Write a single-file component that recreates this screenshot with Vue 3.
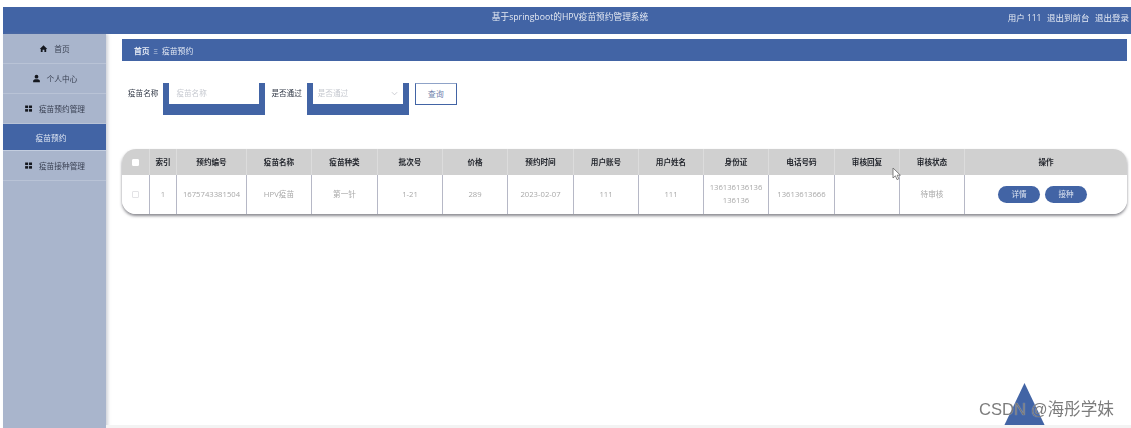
<script setup>
const menu = [
  { label: '首页', icon: 'home', h: 30 },
  { label: '个人中心', icon: 'user', h: 30 },
  { label: '疫苗预约管理', icon: 'grid', h: 30 },
  { label: '疫苗预约', icon: '', h: 27, active: true },
  { label: '疫苗接种管理', icon: 'grid', h: 30 },
]
const cols = [
  { t: '索引', w: 27, v: '1' },
  { t: '预约编号', w: 70, v: '1675743381504' },
  { t: '疫苗名称', w: 65, v: 'HPV疫苗' },
  { t: '疫苗种类', w: 66, v: '第一针' },
  { t: '批次号', w: 65, v: '1-21' },
  { t: '价格', w: 65, v: '289' },
  { t: '预约时间', w: 66, v: '2023-02-07' },
  { t: '用户账号', w: 65, v: '111' },
  { t: '用户姓名', w: 65, v: '111' },
  { t: '身份证', w: 65, v: '136136136136 136136', wrap: true },
  { t: '电话号码', w: 66, v: '13613613666' },
  { t: '审核回复', w: 65, v: '' },
  { t: '审核状态', w: 65, v: '待审核' },
]
</script>

<template>
  <div class="page">
    <header class="topbar">
      <span></span>
      <span class="title">基于springboot的HPV疫苗预约管理系统</span>
      <span class="user">
        <span>用户 111</span>
        <span>退出到前台</span>
        <span>退出登录</span>
      </span>
    </header>

    <div class="body">
      <aside class="sidebar">
        <div
          v-for="m in menu"
          :key="m.label"
          class="item"
          :class="{ active: m.active }"
          :style="{ height: m.h + 'px' }"
        >
          <svg v-if="m.icon === 'home'" class="ico" viewBox="0 0 12 12">
            <path d="M6 1.5 11 6.5 9.6 6.5 9.6 10.5 7.2 10.5 7.2 7.6 4.8 7.6 4.8 10.5 2.4 10.5 2.4 6.5 1 6.5Z" />
          </svg>
          <svg v-else-if="m.icon === 'user'" class="ico" viewBox="0 0 12 12">
            <circle cx="6" cy="3.6" r="2.5" />
            <path d="M1.5 11V9.2C1.5 7.8 3 7 6 7S10.5 7.8 10.5 9.2V11Z" />
          </svg>
          <svg v-else-if="m.icon === 'grid'" class="ico" viewBox="0 0 12 12">
            <rect x="1.5" y="2" width="4" height="3.4" />
            <rect x="6.7" y="2" width="4" height="3.4" />
            <rect x="1.5" y="6.8" width="4" height="3.4" />
            <rect x="6.7" y="6.8" width="4" height="3.4" />
          </svg>
          <span>{{ m.label }}</span>
        </div>
      </aside>

      <main class="main">
        <div class="crumb">
          <span class="c-home">首页</span>
          <span class="c-sep">Ξ</span>
          <span>疫苗预约</span>
        </div>

        <div class="search">
          <span class="lab">疫苗名称</span>
          <div class="well"><div class="field">疫苗名称</div></div>
          <span class="lab second">是否通过</span>
          <div class="well">
            <div class="field sel">
              <span>是否通过</span>
              <svg class="chev" viewBox="0 0 8 5"><path d="M1 1 4 4 7 1" /></svg>
            </div>
          </div>
          <button class="query">查询</button>
        </div>

        <div class="table">
          <div class="row head">
            <div class="cell chk"><i class="box on"></i></div>
            <div v-for="c in cols" :key="c.t" class="cell" :style="{ width: c.w + 'px' }">{{ c.t }}</div>
            <div class="cell grow">操作</div>
          </div>
          <div class="row data">
            <div class="cell chk"><i class="box"></i></div>
            <div
              v-for="c in cols"
              :key="c.t"
              class="cell"
              :class="{ wrap: c.wrap }"
              :style="{ width: c.w + 'px' }"
            >{{ c.v }}</div>
            <div class="cell grow acts">
              <button class="pill">详情</button>
              <button class="pill">接种</button>
            </div>
          </div>
        </div>
      </main>
    </div>

    <svg class="cursor" viewBox="0 0 10 14">
      <path d="M1 1V11L3.4 8.8 5 12.6 6.8 11.8 5.2 8.2H8.4Z" />
    </svg>
    <div class="totop"></div>
    <div class="strip"></div>
    <div class="mark">CSDN @海彤学妹</div>
  </div>
</template>

<style>
html, body { margin: 0; background: #fff; }
</style>

<style scoped>
.page {
  position: relative;
  width: 1131px;
  height: 428px;
  overflow: hidden;
  box-sizing: border-box;
  padding: 7px 0 0 3px;
  display: flex;
  flex-direction: column;
  background: #fff;
  font-family: "Open Sans", "Noto Sans CJK SC", sans-serif;
  font-size: 8px;
}
.topbar {
  height: 27px;
  flex: none;
  box-sizing: border-box;
  padding: 0 2px 8px 8px;
  display: grid;
  grid-template-columns: 1fr auto 1fr;
  align-items: center;
  background: #4264a5;
  color: #e4e9f3;
  font-size: 8.7px;
  filter: blur(.35px);
}
.user {
  display: flex;
  justify-content: flex-end;
  gap: 5.5px;
  font-size: 8.5px;
}
.body {
  flex: 1;
  display: flex;
  min-height: 0;
  filter: blur(.35px);
}
.sidebar {
  width: 103px;
  flex: none;
  background: #a9b5cc;
  box-shadow: 2px 0 3px rgba(120, 130, 150, .35);
}
.item {
  box-sizing: border-box;
  display: flex;
  align-items: center;
  justify-content: center;
  gap: 6px;
  color: #3a4153;
  border-bottom: 1px solid #b9c3d6;
  font-size: 7.7px;
}
.item.active {
  padding-right: 7px;
  background: #4264a5;
  color: #dfe6f2;
  border-bottom-color: #c3cddf;
}
.ico {
  width: 9px;
  height: 9px;
  fill: #15181f;
}
.main {
  flex: 1;
  min-width: 0;
  box-sizing: border-box;
  padding: 5px 4px 0 16px;
}
.crumb {
  height: 22px;
  box-sizing: border-box;
  display: flex;
  align-items: center;
  gap: 4px;
  padding-left: 12px;
  background: #4264a5;
  color: #e2e8f3;
  font-size: 7.8px;
}
.c-home { font-weight: 700; }
.c-sep { font-size: 8px; color: #c8d2e6; }
.search {
  display: flex;
  align-items: flex-start;
  margin-top: 22px;
  padding-left: 6px;
}
.lab {
  color: #333a48;
  font-size: 7.6px;
  line-height: 20px;
  margin-right: 5px;
}
.second { margin-left: 6px; margin-right: 5px; }
.well {
  width: 102px;
  height: 32px;
  box-sizing: border-box;
  padding: 0 6px;
  background: #4264a5;
}
.field {
  height: 21px;
  box-sizing: border-box;
  padding: 0 7px;
  background: #fff;
  color: #c6c9d0;
  font-size: 7.6px;
  line-height: 21px;
}
.sel {
  display: flex;
  align-items: center;
  justify-content: space-between;
  padding: 0 5px;
}
.chev {
  width: 7px;
  height: 5px;
  fill: none;
  stroke: #c3c6cd;
  stroke-width: 1;
}
.query {
  width: 42px;
  height: 22px;
  margin-left: 6px;
  padding: 0 0 1px;
  box-sizing: border-box;
  border: 1px solid #4264a5;
  border-top-color: #8fa3c8;
  background: #fff;
  color: #6f83ad;
  font: inherit;
  font-size: 8px;
}
.table {
  margin-top: 34px;
  border-radius: 14px;
  overflow: hidden;
  background: #fff;
  box-shadow: 0 2px 3px rgba(60, 60, 70, .6);
}
.row { display: flex; }
.head {
  height: 26px;
  background: #d0d0d0;
  color: #24272e;
  font-weight: 600;
  font-size: 7.6px;
}
.data {
  height: 39px;
  background: #fff;
  color: #a8a8a8;
  font-size: 7.7px;
}
.cell {
  flex: none;
  box-sizing: border-box;
  display: flex;
  align-items: center;
  justify-content: center;
  text-align: center;
  border-right: 1px solid #dcdcdc;
  line-height: 13px;
}
.data .cell {
  border-right: 1px solid #b6b8c6;
  padding-bottom: 1px;
}
.cell.wrap { padding: 0 2px 1px; }
.chk { width: 28px; }
.grow { flex: 1; border-right: 0 !important; }
.acts { gap: 5px; padding-right: 7px; }
.box {
  width: 7px;
  height: 7px;
  box-sizing: border-box;
  border: 1px solid #e3e3e6;
  border-radius: 1px;
  background: #fff;
}
.box.on { border-color: #fff; }
.pill {
  width: 42px;
  height: 17px;
  padding: 0;
  border: 0;
  border-radius: 9px;
  background: #4264a5;
  color: #dfe6f2;
  font: inherit;
  font-size: 7.6px;
}
.cursor {
  position: absolute;
  left: 892px;
  top: 167px;
  width: 10px;
  height: 14px;
  fill: #fff;
  stroke: #666;
  stroke-width: .8;
}
.totop {
  position: absolute;
  left: 1003px;
  top: 383px;
  width: 43px;
  height: 45px;
  background: #4264a5;
  clip-path: polygon(50% 0, 100% 100%, 0 100%);
}
.strip {
  position: absolute;
  left: 106px;
  right: 0;
  bottom: 0;
  height: 3px;
  background: #f3f3f3;
}
.mark {
  position: absolute;
  left: 979px;
  top: 401px;
  color: rgba(110, 110, 110, .9);
  text-shadow: 0 0 1px rgba(255, 255, 255, .7);
  font-family: "Liberation Sans", "Noto Sans CJK SC", sans-serif;
  font-size: 16.6px;
  line-height: 18px;
  white-space: nowrap;
}
</style>
